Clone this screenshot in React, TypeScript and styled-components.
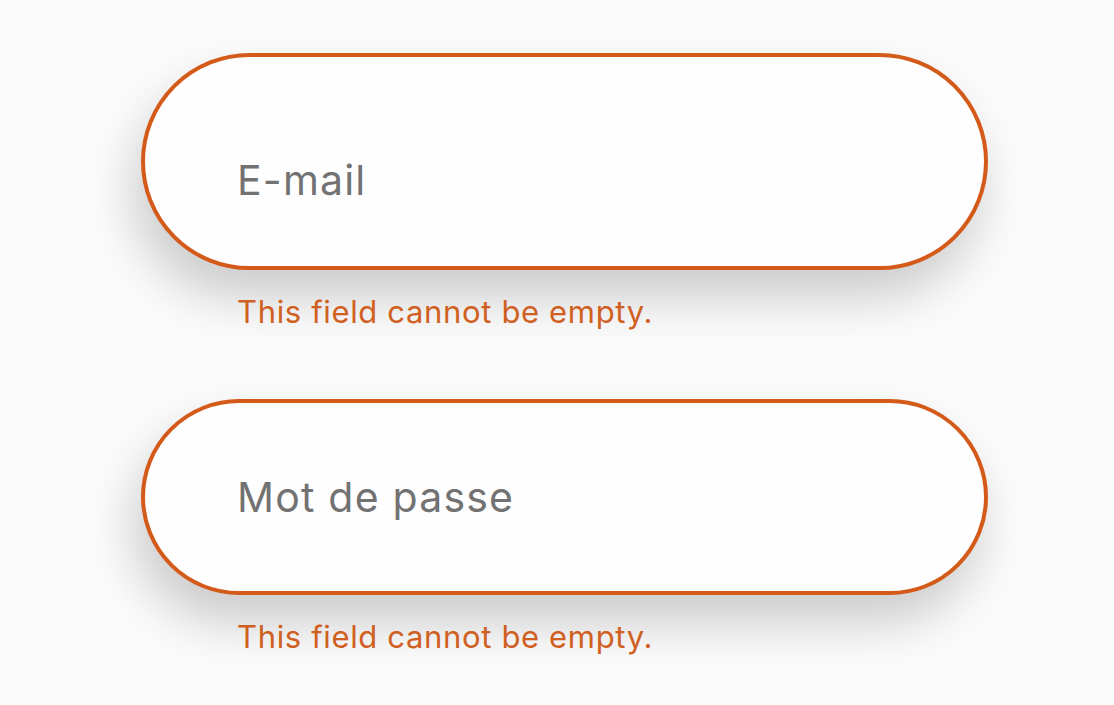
import React from "react";
import styled, { createGlobalStyle } from "styled-components";

const Global = createGlobalStyle`
  html, body { margin: 0; padding: 0; background: #fbfbfb; }
  body { font-family: Inter, "Noto Sans", sans-serif; }
`;

const Page = styled.div`
  width: 1114px;
  height: 705px;
  box-sizing: border-box;
  padding: 53px 0 0 141px;
  display: flex;
  flex-direction: column;
  gap: 72px;
  overflow: hidden;
`;

const Group = styled.div`
  display: flex;
  flex-direction: column;
  width: 847px;
`;

const Field = styled.div<{ $h: number; $pt: number }>`
  box-sizing: border-box;
  height: ${(p) => p.$h}px;
  padding: ${(p) => p.$pt}px 0 0 92px;
  border: 4px solid #d45a1a;
  border-radius: 999px;
  background: #fefefe;
  display: flex;
  align-items: center;
  box-shadow: -8px 28px 50px rgba(0, 0, 0, 0.19);
`;

const Placeholder = styled.span`
  font-size: 41px;
  color: #727272;
  line-height: 1;
  letter-spacing: 1.2px;
`;

const ErrorText = styled.div`
  margin: 26px 0 0 96px;
  font-size: 31px;
  line-height: 1;
  letter-spacing: 0.65px;
  color: #d0601f;
`;

export default function App() {
  return (
    <>
      <Global />
      <Page>
        <Group>
          <Field $h={217} $pt={38}>
            <Placeholder>E-mail</Placeholder>
          </Field>
          <ErrorText>This field cannot be empty.</ErrorText>
        </Group>
        <Group>
          <Field $h={196} $pt={0}>
            <Placeholder>Mot de passe</Placeholder>
          </Field>
          <ErrorText>This field cannot be empty.</ErrorText>
        </Group>
      </Page>
    </>
  );
}
